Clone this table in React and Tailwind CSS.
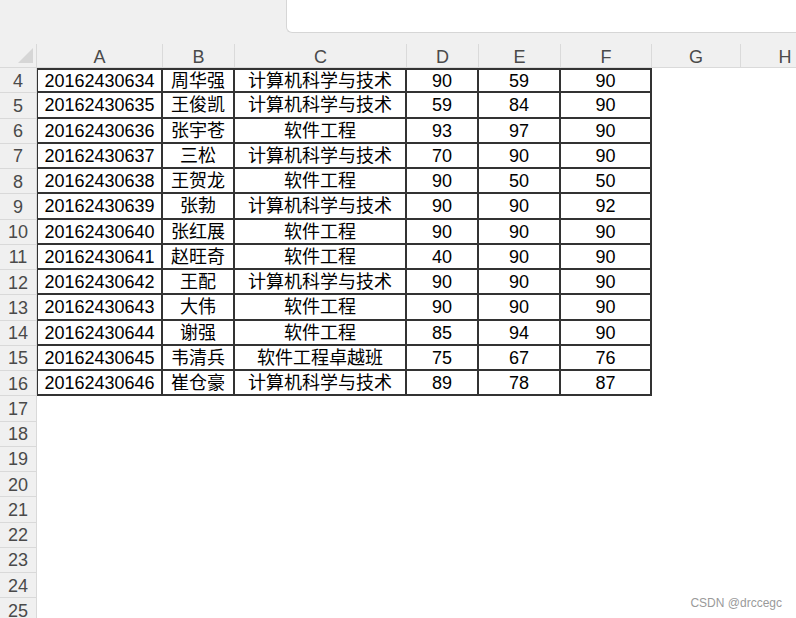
import React from 'react';

const cols = ['A', 'B', 'C', 'D', 'E', 'F', 'G', 'H'];

const rows = [
  ['20162430634', '周华强', '计算机科学与技术', '90', '59', '90'],
  ['20162430635', '王俊凯', '计算机科学与技术', '59', '84', '90'],
  ['20162430636', '张宇苍', '软件工程', '93', '97', '90'],
  ['20162430637', '三松', '计算机科学与技术', '70', '90', '90'],
  ['20162430638', '王贺龙', '软件工程', '90', '50', '50'],
  ['20162430639', '张勃', '计算机科学与技术', '90', '90', '92'],
  ['20162430640', '张红展', '软件工程', '90', '90', '90'],
  ['20162430641', '赵旺奇', '软件工程', '40', '90', '90'],
  ['20162430642', '王配', '计算机科学与技术', '90', '90', '90'],
  ['20162430643', '大伟', '软件工程', '90', '90', '90'],
  ['20162430644', '谢强', '软件工程', '85', '94', '90'],
  ['20162430645', '韦清兵', '软件工程卓越班', '75', '67', '76'],
  ['20162430646', '崔仓豪', '计算机科学与技术', '89', '78', '87'],
];

const grid = 'grid grid-cols-[37px_126px_72px_172px_72px_82px_91px_89px_89px]';

function RowHead({ n }) {
  return (
    <div className="flex items-center justify-center pt-px bg-[#f0f0f0] border-r border-b border-[#d9d9d9] text-[#4a4a4a]">
      {n}
    </div>
  );
}

export default function App() {
  const empty = [];
  for (let n = 17; n <= 25; n++) empty.push(n);

  return (
    <div
      className="relative w-[796px] h-[618px] overflow-hidden bg-white text-[18px] leading-none"
      style={{ fontFamily: '"Liberation Sans", "Noto Sans CJK SC", sans-serif' }}
    >
      {/* formula bar strip */}
      <div className="flex h-[44px] bg-[#f0f0f0]">
        <div className="w-[286px] shrink-0" />
        <div className="h-[33px] flex-1 bg-white border-l border-b border-[#d6d6d6] rounded-bl-[6px]" />
      </div>

      {/* column headers */}
      <div className={`${grid} h-[24px] w-[830px] bg-[#f0f0f0] text-[#4a4a4a]`}>
        <div className="relative border-r border-b border-[#d9d9d9]">
          <svg className="absolute left-0 top-0" width="37" height="24" viewBox="0 0 37 24">
            <polygon points="33,4 33,19 18,19" fill="#d6d6d6" />
          </svg>
        </div>
        {cols.map((c) => (
          <div key={c} className="flex items-center justify-center pt-0.5 border-r border-b border-[#dadada]">
            {c}
          </div>
        ))}
      </div>

      {/* data rows */}
      {rows.map((r, i) => (
        <div key={i} className={`${grid} h-[25.25px] w-[830px]`}>
          <RowHead n={i + 4} />
          {r.map((v, j) => (
            <div
              key={j}
              className={`flex items-center justify-center pt-px text-black border-r-2 border-b-2 border-[#333] ${i === 0 ? 'border-t-2' : ''} ${j === 0 ? 'border-l' : ''}`}
            >
              {v}
            </div>
          ))}
          <div />
          <div />
        </div>
      ))}

      {/* empty rows */}
      {empty.map((n) => (
        <div key={n} className={`${grid} h-[25.25px] w-[830px]`}>
          <RowHead n={n} />
        </div>
      ))}

      <div className="absolute right-[14px] bottom-[9px] text-[12px] text-[#9a9a9a]">CSDN @drccegc</div>
    </div>
  );
}
